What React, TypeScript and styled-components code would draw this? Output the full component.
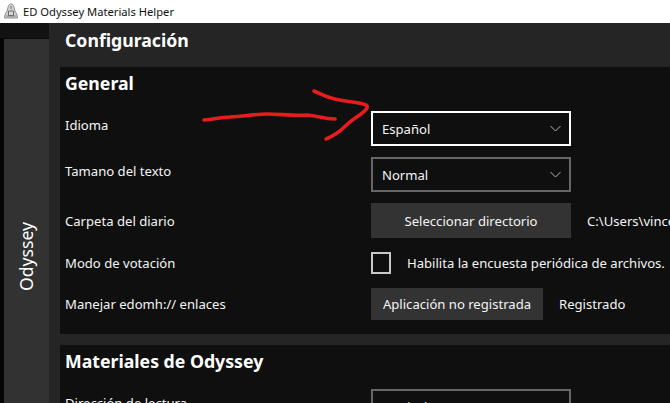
import React from 'react';
import styled, { createGlobalStyle } from 'styled-components';

const GlobalStyle = createGlobalStyle`
  html, body {
    margin: 0;
    height: 100%;
    overflow: hidden;
    background: #252525;
  }
  * {
    box-sizing: border-box;
  }
`;

const Window = styled.div`
  position: relative;
  width: 670px;
  height: 403px;
  overflow: hidden;
  display: flex;
  flex-direction: column;
  font-family: "Noto Sans", "Open Sans", sans-serif;
  font-size: 13.1px;
  color: #f4f4f4;
`;

const TitleBar = styled.div`
  flex: none;
  height: 23px;
  background: #fff;
  color: #111;
  display: flex;
  align-items: center;
  gap: 4px;
  padding: 0 0 1px 3px;
  font-size: 11.2px;
`;

const Body = styled.div`
  flex: 1;
  min-height: 0;
  display: flex;
`;

const Rail = styled.div`
  flex: none;
  width: 49px;
  padding: 15px 0 0 3px;
  background: linear-gradient(#121212 15px, #050505 15px);
`;

const RailTab = styled.div`
  width: 46px;
  height: 436px;
  background: #323232;
  border-top: 1px solid #0a0a0a;
  border-left: 1px solid #0a0a0a;
  display: flex;
  align-items: center;
  justify-content: center;
  color: #fff;
  font-size: 17.6px;
`;

const RailLabel = styled.span`
  writing-mode: vertical-rl;
  transform: rotate(180deg);
  margin-right: 2px;
`;

const Main = styled.div`
  flex: 1;
  min-width: 0;
  padding-left: 11px;
  background: #252525;
`;

const PageHeading = styled.h1`
  margin: 0;
  height: 44px;
  padding: 0 0 11px 5px;
  display: flex;
  align-items: center;
  font-size: 17.7px;
  font-weight: 700;
  color: #fff;
`;

const Panel = styled.section<{ $height: number }>`
  height: ${(p) => p.$height}px;
  margin-bottom: 11px;
  padding: 0 0 0 5px;
  background: #0f0f0f;
  overflow: hidden;
`;

const PanelTitle = styled.h2<{ $height: number }>`
  margin: 0;
  height: ${(p) => p.$height}px;
  padding-top: 3px;
  font-size: 17.7px;
  font-weight: 700;
  color: #fff;
  line-height: 27px;
`;

const Row = styled.div<{ $height: number; $gap: number }>`
  display: grid;
  grid-template-columns: 306px 1fr;
  align-items: center;
  height: ${(p) => p.$height}px;
  margin-bottom: ${(p) => p.$gap}px;
`;

const Label = styled.div<{ $raised?: boolean }>`
  padding-bottom: ${(p) => (p.$raised ? 7 : 0)}px;
  white-space: nowrap;
`;

const Controls = styled.div`
  display: flex;
  align-items: center;
  height: 100%;
  white-space: nowrap;
  min-width: 0;
`;

const SelectBox = styled.div<{ $focused?: boolean }>`
  width: 200px;
  height: 100%;
  padding: 0 8px 0 9px;
  border: 2px solid ${(p) => (p.$focused ? '#fff' : '#666')};
  display: flex;
  align-items: center;
  justify-content: space-between;
`;

const ActionButton = styled.div<{ $width: number }>`
  flex: none;
  width: ${(p) => p.$width}px;
  height: 100%;
  background: #333;
  display: flex;
  align-items: center;
  justify-content: center;
`;

const SideText = styled.span<{ $left: number }>`
  margin-left: ${(p) => p.$left}px;
`;

const CheckBox = styled.div`
  flex: none;
  width: 20px;
  height: 22px;
  border: 2px solid #c8c8c8;
`;

const Scribble = styled.svg`
  position: absolute;
  left: 195px;
  top: 85px;
  pointer-events: none;
`;

const AppIcon = () => (
  <svg width="16" height="16" viewBox="0 0 16 16" fill="none" aria-hidden="true">
    <path d="M8 1 C5.5 1 5 4 4.4 7 L2 12 L1.5 15 H14.5 L14 12 L11.6 7 C11 4 10.5 1 8 1 Z" fill="#d4d4d4" stroke="#8c8c8c" />
    <path d="M5.5 8 H10.5 V12.5 H5.5 Z M8 3 V6 M3.5 13 H12.5" stroke="#6c6c6c" />
  </svg>
);

const Chevron = () => (
  <svg width="11" height="7" viewBox="0 0 11 7" fill="none" aria-hidden="true">
    <path d="M0.5 1 L5.5 6 L10.5 1" stroke="#b4b4b4" strokeWidth="1" />
  </svg>
);

export default function App() {
  return (
    <Window>
      <GlobalStyle />
      <TitleBar>
        <AppIcon />
        ED Odyssey Materials Helper
      </TitleBar>
      <Body>
        <Rail>
          <RailTab>
            <RailLabel>Odyssey</RailLabel>
          </RailTab>
        </Rail>
        <Main>
          <PageHeading>Configuración</PageHeading>
          <Panel $height={267}>
            <PanelTitle $height={44}>General</PanelTitle>
            <Row $height={35} $gap={11}>
              <Label $raised>Idioma</Label>
              <Controls>
                <SelectBox $focused>
                  Español
                  <Chevron />
                </SelectBox>
              </Controls>
            </Row>
            <Row $height={35} $gap={11}>
              <Label $raised>Tamano del texto</Label>
              <Controls>
                <SelectBox>
                  Normal
                  <Chevron />
                </SelectBox>
              </Controls>
            </Row>
            <Row $height={35} $gap={14}>
              <Label>Carpeta del diario</Label>
              <Controls>
                <ActionButton $width={200}>Seleccionar directorio</ActionButton>
                <SideText $left={16}>C:\Users\vincent\Saved Games</SideText>
              </Controls>
            </Row>
            <Row $height={22} $gap={14}>
              <Label>Modo de votación</Label>
              <Controls>
                <CheckBox />
                <SideText $left={16}>Habilita la encuesta periódica de archivos.</SideText>
              </Controls>
            </Row>
            <Row $height={32} $gap={0}>
              <Label>Manejar edomh:// enlaces</Label>
              <Controls>
                <ActionButton $width={172}>Aplicación no registrada</ActionButton>
                <SideText $left={16}>Registrado</SideText>
              </Controls>
            </Row>
          </Panel>
          <Panel $height={80}>
            <PanelTitle $height={44}>Materiales de Odyssey</PanelTitle>
            <Row $height={35} $gap={0}>
              <Label $raised>Dirección de lectura</Label>
              <Controls>
                <SelectBox>
                  Vertical
                  <Chevron />
                </SelectBox>
              </Controls>
            </Row>
          </Panel>
        </Main>
      </Body>
      <Scribble width="185" height="60" viewBox="0 0 185 60" fill="none" aria-hidden="true">
        <path
          d="M9 35 C20 35 22 32 35 32 C50 31 62 29 72 29 C85 29 98 31 112 30 C124 31 128 34 140 34"
          stroke="#e81c1c"
          strokeWidth="3.6"
          strokeLinecap="round"
        />
        <path
          d="M119 6 C128 10 134 14 145 15 C154 17 164 17 171 20 C174 22 171 25 166 29 C158 34 152 39 146 45 C142 49 137 51 131 54"
          stroke="#e81c1c"
          strokeWidth="3.6"
          strokeLinecap="round"
        />
      </Scribble>
    </Window>
  );
}
